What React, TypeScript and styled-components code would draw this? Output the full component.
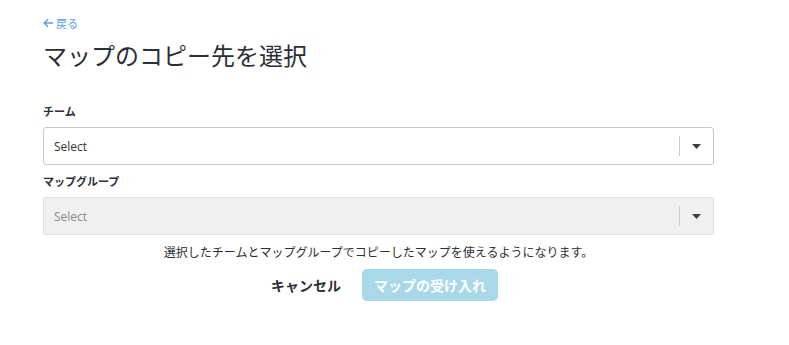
import styled, { createGlobalStyle } from "styled-components";

const GlobalStyle = createGlobalStyle`
  html, body {
    margin: 0;
    padding: 0;
    background: #ffffff;
  }
  body {
    font-family: "Noto Sans", "Noto Sans CJK JP", sans-serif;
    color: #2b2f36;
  }
`;

const Page = styled.div`
  width: 671px;
  padding: 14px 0 0 43px;
  display: flex;
  flex-direction: column;
`;

const BackLink = styled.a`
  display: flex;
  align-items: center;
  gap: 2px;
  font-size: 11px;
  color: #5b9fe6;
  text-decoration: none;
  height: 18px;
  cursor: pointer;
`;

const Title = styled.h1`
  margin: 6px 0 0;
  font-size: 24px;
  font-weight: 400;
  line-height: 34px;
  font-family: "Noto Sans CJK JP", sans-serif;
  color: #2b2f36;
`;

const Form = styled.div`
  margin-top: 31px;
  display: flex;
  flex-direction: column;
`;

const Label = styled.div`
  font-size: 11px;
  font-weight: 700;
  font-family: "Noto Sans CJK JP", sans-serif;
  line-height: 16px;
  margin-bottom: 8px;
  color: #2b2f36;
`;

const SelectBox = styled.div<{ disabled?: boolean }>`
  height: 38px;
  box-sizing: border-box;
  border: 1px solid ${(p) => (p.disabled ? "#e0e0e0" : "#c8c8c8")};
  border-radius: 3px;
  background: ${(p) => (p.disabled ? "#f0f0f0" : "#ffffff")};
  display: flex;
  align-items: center;
  margin-bottom: ${(p) => (p.disabled ? "0" : "8px")};
`;

const SelectValue = styled.div<{ disabled?: boolean }>`
  flex: 1;
  padding-left: 10px;
  font-family: "Open Sans", sans-serif;
  font-size: 12px;
  color: ${(p) => (p.disabled ? "#8a8a8a" : "#333333")};
`;

const Separator = styled.span`
  width: 1px;
  height: 20px;
  background: #cccccc;
`;

const Arrow = styled.span`
  width: 33px;
  display: flex;
  justify-content: center;
  align-items: center;
`;

const Help = styled.p`
  margin: 8px 0 0;
  text-align: center;
  font-size: 12px;
  line-height: 18px;
  font-family: "Noto Sans CJK JP", sans-serif;
  color: #2b2f36;
`;

const Actions = styled.div`
  display: flex;
  justify-content: center;
  align-items: center;
  gap: 19px;
  margin-top: 8px;
  padding-left: 10px;
`;

const CancelButton = styled.button`
  border: none;
  background: none;
  font-family: "Noto Sans CJK JP", sans-serif;
  font-size: 14px;
  font-weight: 700;
  color: #2b2f36;
  padding: 0 2px;
  cursor: pointer;
`;

const AcceptButton = styled.button`
  border: none;
  background: #a9d9e8;
  color: #ffffff;
  font-family: "Noto Sans CJK JP", sans-serif;
  font-size: 14px;
  font-weight: 700;
  width: 136px;
  height: 32px;
  border-radius: 5px;
  cursor: not-allowed;
`;

const Caret = () => (
  <svg width="9" height="5" viewBox="0 0 9 5">
    <path d="M0 0h9L4.5 5z" fill="#3a3f47" />
  </svg>
);

const Select = ({ disabled }: { disabled?: boolean }) => (
  <SelectBox disabled={disabled}>
    <SelectValue disabled={disabled}>Select</SelectValue>
    <Separator />
    <Arrow>
      <Caret />
    </Arrow>
  </SelectBox>
);

export default function App() {
  return (
    <>
      <GlobalStyle />
      <Page>
        <BackLink>
          <svg width="11" height="10" viewBox="0 0 11 10">
            <path
              d="M10 5H1.5M5 1.2L1.2 5 5 8.8"
              stroke="#5b9fe6"
              strokeWidth="1.4"
              fill="none"
            />
          </svg>
          戻る
        </BackLink>
        <Title>マップのコピー先を選択</Title>
        <Form>
          <Label>チーム</Label>
          <Select />
          <Label>マップグループ</Label>
          <Select disabled />
          <Help>選択したチームとマップグループでコピーしたマップを使えるようになります。</Help>
          <Actions>
            <CancelButton>キャンセル</CancelButton>
            <AcceptButton disabled>マップの受け入れ</AcceptButton>
          </Actions>
        </Form>
      </Page>
    </>
  );
}
